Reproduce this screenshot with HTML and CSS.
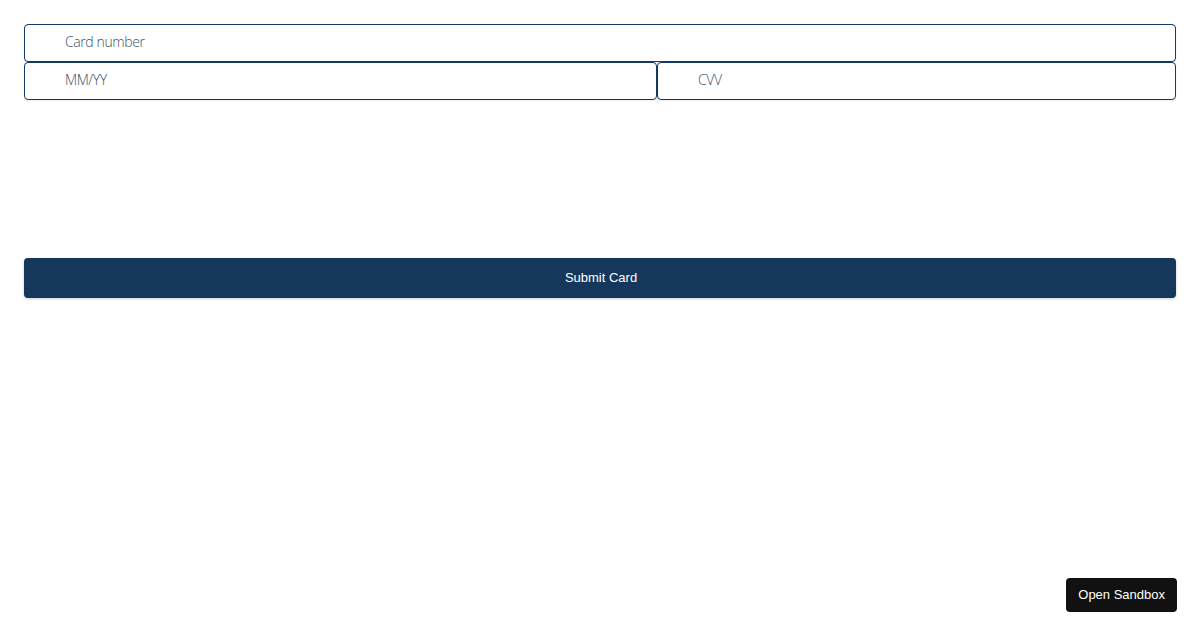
FILE: index.html
```html
<!DOCTYPE html>
<html>
<head>
<meta charset="utf-8">
<link rel="stylesheet" href="styles.css">
</head>
<body>
<div class="page">
  <form class="card-form">
    <div class="fields">
      <div class="field field-full"><span class="ph">Card number</span></div>
      <div class="row">
        <div class="field field-exp"><span class="ph">MM/YY</span></div>
        <div class="field field-cvv"><span class="ph">CVV</span></div>
      </div>
    </div>
    <button type="button" class="submit">Submit Card</button>
  </form>
</div>
<a class="sandbox">Open Sandbox</a>
</body>
</html>
```

FILE: styles.css
```css
html, body {
  margin: 0;
  padding: 0;
  background: #fff;
}
.page {
  padding: 24px;
}
.card-form {
  display: flex;
  flex-direction: column;
}
.fields {
  display: flex;
  flex-direction: column;
}
.row {
  display: flex;
}
.field {
  box-sizing: border-box;
  height: 38px;
  border: 1px solid #153a60;
  border-radius: 4px;
  box-shadow: 0 1px 2px rgba(0, 0, 0, 0.08);
  padding-left: 40px;
  padding-bottom: 4px;
  display: flex;
  align-items: center;
  background: #fff;
}
.field-exp {
  width: 633px;
}
.field-cvv {
  flex: 1;
}
.ph {
  font-family: "Open Sans", sans-serif;
  font-weight: 300;
  font-size: 14px;
  color: #3a4f6a;
  letter-spacing: -0.4px;
}
.submit {
  margin-top: 158px;
  height: 40px;
  padding: 0 0 2px 2px;
  border: none;
  border-radius: 4px;
  background: #15375c;
  color: #fff;
  font-family: "Liberation Sans", Arial, sans-serif;
  font-size: 13px;
  box-shadow: 0 1px 3px rgba(0, 0, 0, 0.2);
}
.sandbox {
  position: fixed;
  right: 23px;
  bottom: 18px;
  background: #111;
  color: #fff;
  font-family: "Liberation Sans", Arial, sans-serif;
  font-size: 13px;
  border-radius: 4px;
  padding: 9px 12px 9px 12px;
  line-height: 16px;
}
```
